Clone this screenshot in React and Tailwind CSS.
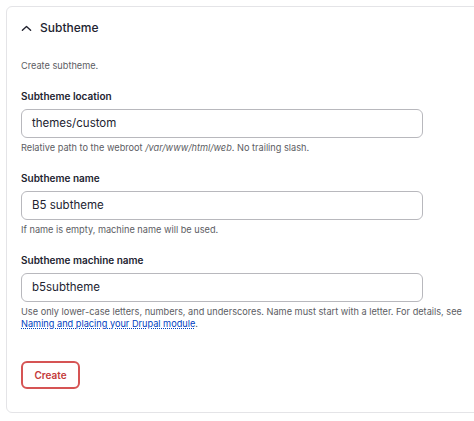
import React from 'react';

const font = { fontFamily: 'Inter, "Noto Sans", sans-serif' };

function Field({ label, value, children }) {
  return (
    <div className="mb-[17px]">
      <label className="block text-[10px] font-semibold text-[#222330] leading-[14px] mb-[6px]">{label}</label>
      <div className="w-[402px] h-[29px] rounded-[6px] border border-[#b8b8bd] bg-white flex items-center px-[10px] text-[11.5px] text-[#222330]">
        {value}
      </div>
      <div className="mt-[4px] text-[9.2px] leading-[12px] text-[#5c5d63]">{children}</div>
    </div>
  );
}

export default function App() {
  return (
    <div className="bg-white min-h-[421px] pt-[6px] pl-[6px]" style={font}>
      <div className="w-[480px] h-[407px] rounded-l-[6px] border border-[#e4e4e7]">
        <div className="flex items-center gap-[8px] pl-[14px] h-[42px]">
          <svg width="11" height="11" viewBox="0 0 12 12" fill="none" stroke="#222330" strokeWidth="1.5" strokeLinecap="round" strokeLinejoin="round">
            <path d="M1.5 8 L6 3.8 L10.5 8" />
          </svg>
          <span className="text-[12px] font-medium text-[#222330]">Subtheme</span>
        </div>
        <div className="pl-[14px] pt-[11px]">
          <p className="text-[9.2px] text-[#5c5d63] leading-[12px] mb-[17px]">Create subtheme.</p>
          <Field label="Subtheme location" value="themes/custom">
            Relative path to the webroot <em>/var/www/html/web</em>. No trailing slash.
          </Field>
          <Field label="Subtheme name" value="B5 subtheme">
            If name is empty, machine name will be used.
          </Field>
          <Field label="Subtheme machine name" value="b5subtheme">
            Use only lower-case letters, numbers, and underscores. Name must start with a letter. For details, see
            <br />
            <a href="#" className="text-[#0041c2] underline decoration-dotted">Naming and placing your Drupal module</a>.
          </Field>
          <button className="mt-[14px] h-[28px] w-[59px] rounded-[6px] border-2 border-[#d65454] text-[#c43a3a] text-[10px] font-semibold">
            Create
          </button>
        </div>
      </div>
    </div>
  );
}
